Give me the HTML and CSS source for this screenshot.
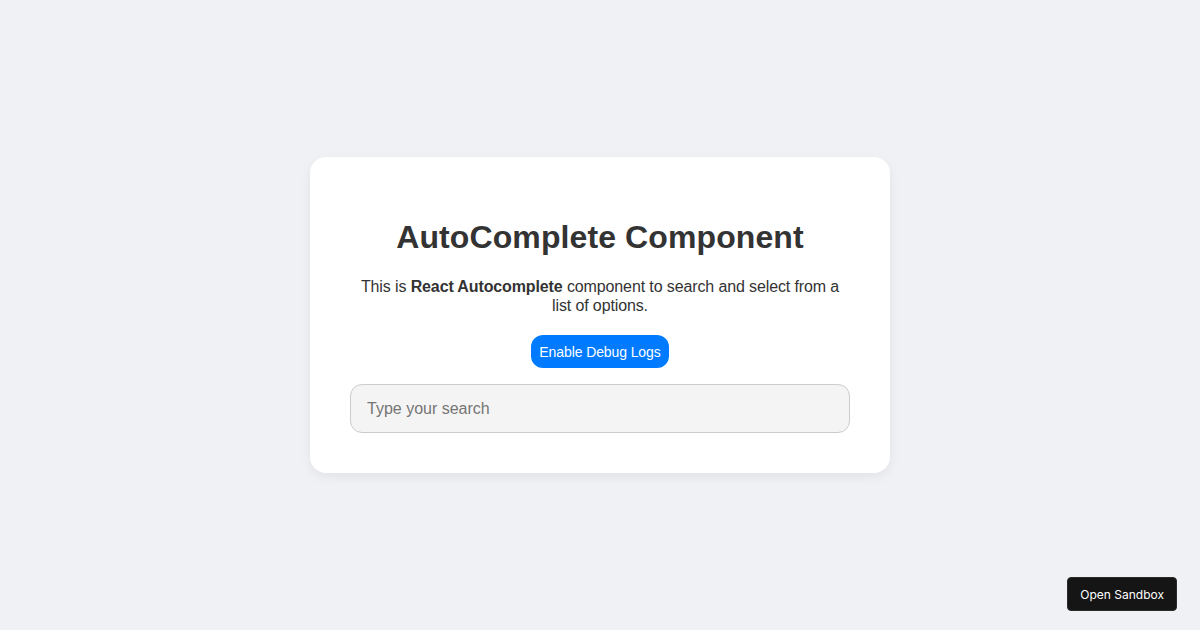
FILE: index.html
```html
<!DOCTYPE html>
<html>
<head>
<meta charset="utf-8">
<link rel="stylesheet" href="styles.css">
</head>
<body>
<main class="page">
  <section class="card">
    <h1 class="title">AutoComplete Component</h1>
    <p class="desc">This is <strong>React Autocomplete</strong> component to search and select from a list of options.</p>
    <button class="debug-btn">Enable Debug Logs</button>
    <input class="search" type="text" placeholder="Type your search">
  </section>
</main>
<button class="sandbox-btn">Open Sandbox</button>
</body>
</html>
```
FILE: styles.css
```css
html, body {
  margin: 0;
  padding: 0;
}
body {
  background: #f0f1f5;
  font-family: "Liberation Sans", Arial, sans-serif;
  color: #333;
  width: 1200px;
  height: 630px;
  overflow: hidden;
  position: relative;
}
.page {
  height: 630px;
  display: flex;
  align-items: center;
  justify-content: center;
}
.card {
  width: 500px;
  padding: 40px;
  background: #fff;
  border-radius: 16px;
  box-shadow: 0 4px 12px rgba(0, 0, 0, 0.06);
  display: flex;
  flex-direction: column;
  align-items: center;
  text-align: center;
}
.title {
  font-size: 32px;
  font-weight: 700;
  margin: 22px 0 21px;
  line-height: 37px;
  color: #333;
  letter-spacing: 0.1px;
}
.desc {
  font-size: 16px;
  line-height: 19px;
  margin: 0 0 20px;
  padding: 0;
  color: #333;
  letter-spacing: -0.12px;
}
.desc strong {
  font-weight: 700;
}
.debug-btn {
  font-family: "Liberation Sans", Arial, sans-serif;
  font-size: 14px;
  letter-spacing: -0.1px;
  background: #007bff;
  color: #fff;
  border: none;
  border-radius: 12px;
  padding: 0 8px;
  height: 33px;
  margin-bottom: 16px;
  cursor: pointer;
}
.search {
  box-sizing: border-box;
  width: 500px;
  height: 49px;
  border: 1px solid #ccc;
  border-radius: 12px;
  background: #f4f4f4;
  padding: 0 16px;
  font-family: "Liberation Sans", Arial, sans-serif;
  font-size: 16px;
  color: #333;
  outline: none;
}
.search::placeholder {
  color: #757575;
}
.sandbox-btn {
  position: absolute;
  right: 23px;
  bottom: 19px;
  height: 34px;
  padding: 0 12px;
  background: #151515;
  color: #fff;
  border: 1px solid #2a2a2a;
  border-radius: 4px;
  font-family: Inter, "Liberation Sans", sans-serif;
  font-size: 12px;
}
```
